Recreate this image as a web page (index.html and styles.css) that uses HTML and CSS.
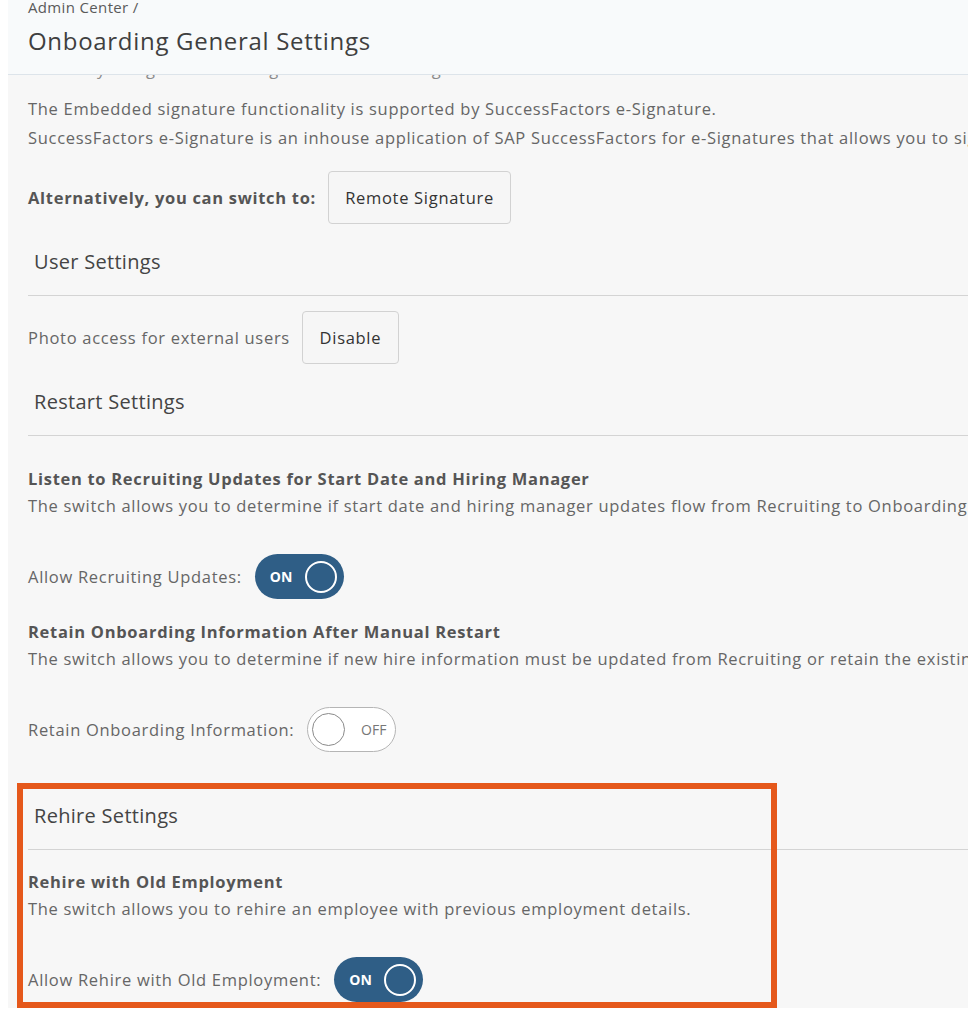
FILE: index.html
```html
<!DOCTYPE html>
<html lang="en">
<head>
<meta charset="utf-8">
<title>Onboarding General Settings</title>
<link rel="stylesheet" href="styles.css">
</head>
<body>
<div class="page">
  <header class="page-header">
    <div class="crumb">Admin Center /</div>
    <h1 class="title">Onboarding General Settings</h1>
  </header>
  <main class="content">
    <div class="clipped"><span>Currently using Embedded Signature for the e-Sign.</span></div>
    <p class="intro">The Embedded signature functionality is supported by SuccessFactors e-Signature.<br>SuccessFactors e-Signature is an inhouse application of SAP SuccessFactors for e-Signatures that allows you to sign documents electronically.</p>

    <div class="row row-alt">
      <span class="label strong">Alternatively, you can switch to:</span>
      <button class="btn btn-remote">Remote Signature</button>
    </div>

    <h2 class="section-title">User Settings</h2>
    <hr class="rule">
    <div class="row row-photo">
      <span class="label">Photo access for external users</span>
      <button class="btn btn-disable">Disable</button>
    </div>

    <h2 class="section-title">Restart Settings</h2>
    <hr class="rule">
    <div class="setting setting-first">
      <div class="setting-title">Listen to Recruiting Updates for Start Date and Hiring Manager</div>
      <div class="setting-desc">The switch allows you to determine if start date and hiring manager updates flow from Recruiting to Onboarding. If you turn off this switch, the updates are not reflected.</div>
      <div class="row row-switch">
        <span class="label">Allow Recruiting Updates:</span>
        <span class="switch on"><span class="switch-text">ON</span><span class="knob"></span></span>
      </div>
    </div>
    <div class="setting">
      <div class="setting-title">Retain Onboarding Information After Manual Restart</div>
      <div class="setting-desc">The switch allows you to determine if new hire information must be updated from Recruiting or retain the existing information after a manual restart.</div>
      <div class="row row-switch">
        <span class="label">Retain Onboarding Information:</span>
        <span class="switch off"><span class="knob"></span><span class="switch-text">OFF</span></span>
      </div>
    </div>

    <section class="rehire">
      <div class="highlight"></div>
      <h2 class="section-title">Rehire Settings</h2>
      <hr class="rule">
      <div class="setting setting-rehire">
        <div class="setting-title">Rehire with Old Employment</div>
        <div class="setting-desc">The switch allows you to rehire an employee with previous employment details.</div>
        <div class="row row-switch">
          <span class="label">Allow Rehire with Old Employment:</span>
          <span class="switch on"><span class="switch-text">ON</span><span class="knob"></span></span>
        </div>
      </div>
    </section>
  </main>
</div>
</body>
</html>
```

FILE: styles.css
```css
html, body {
  margin: 0;
  padding: 0;
  background: #ffffff;
}

body {
  font-family: "Open Sans", "Liberation Sans", sans-serif;
  overflow: hidden;
}

.page {
  margin-left: 8px;
  width: 960px;
  height: 1008px;
  background: #f7f7f7;
  overflow: hidden;
}

.page-header {
  display: flex;
  flex-direction: column;
  height: 74px;
  background: #f8fafb;
  border-bottom: 1px solid #dde4ea;
  padding-left: 20px;
}

.crumb {
  font-size: 15px;
  line-height: 18px;
  letter-spacing: 0.35px;
  color: #5a5a5a;
  margin-top: -2px;
}

.title {
  margin: 9px 0 0 0;
  font-size: 24px;
  font-weight: 400;
  line-height: 32px;
  letter-spacing: 0.7px;
  color: #3f3f3f;
}

.content {
  padding-left: 20px;
  font-size: 16.5px;
  letter-spacing: 0.7px;
}

.clipped {
  height: 9px;
  overflow: hidden;
  white-space: nowrap;
}

.clipped span {
  display: block;
  margin-top: -16px;
  line-height: 20px;
  color: #8a8a8a;
}

.intro {
  margin: 10px 0 0 0;
  line-height: 29px;
  color: #666;
  white-space: nowrap;
}

.row {
  display: flex;
  align-items: center;
  gap: 12px;
  white-space: nowrap;
}

.label {
  color: #666;
}

.label.strong {
  font-weight: 700;
  color: #555;
}

.btn {
  font-family: inherit;
  font-size: 16.5px;
  letter-spacing: 0.7px;
  color: #333;
  background: #f6f6f6;
  border: 1px solid #d2d2d2;
  border-radius: 4px;
  height: 53px;
  padding: 0;
  cursor: pointer;
}

.btn-remote {
  width: 183px;
}

.btn-disable {
  width: 97px;
}

.row-alt {
  margin-top: 19px;
}

.section-title {
  margin: 23px 0 0 0;
  padding-left: 6px;
  font-size: 20px;
  font-weight: 400;
  line-height: 30px;
  letter-spacing: 0.3px;
  color: #444;
}

.rule {
  margin: 18px 0 0 0;
  border: 0;
  border-top: 1px solid #d4d4d4;
  height: 0;
}

.row-photo {
  margin-top: 15px;
}

.setting {
  margin-top: 19px;
}

.setting-first {
  margin-top: 29px;
}

.setting-title {
  font-weight: 700;
  line-height: 27px;
  color: #555;
  white-space: nowrap;
}

.setting-desc {
  line-height: 27px;
  color: #666;
  white-space: nowrap;
}

.row-switch {
  margin-top: 35px;
  gap: 13px;
}

.switch {
  display: inline-flex;
  align-items: center;
  justify-content: space-between;
  box-sizing: border-box;
  width: 89px;
  height: 45px;
  border-radius: 23px;
  letter-spacing: 0;
}

.switch.on {
  background: #2f5e86;
  padding: 0 7px 0 15px;
}

.switch.on .switch-text {
  color: #fff;
  font-weight: 700;
  font-size: 14px;
}

.switch.on .knob {
  width: 32px;
  height: 32px;
  box-sizing: border-box;
  border: 2px solid #fff;
  border-radius: 50%;
}

.switch.off {
  background: #fff;
  border: 1px solid #b5b5b5;
  padding: 0 9px 0 4px;
}

.switch.off .knob {
  width: 33px;
  height: 33px;
  box-sizing: border-box;
  border: 1.5px solid #8a8a8a;
  border-radius: 50%;
}

.switch.off .switch-text {
  color: #777;
  font-size: 14px;
}

.rehire {
  position: relative;
  margin-top: 49px;
}

.rehire .section-title {
  margin-top: 0;
}

.setting-rehire {
  margin-top: 18px;
}

.highlight {
  position: absolute;
  left: -11px;
  top: -18px;
  width: 760px;
  height: 225px;
  box-sizing: border-box;
  border: 6px solid #e5581b;
  pointer-events: none;
}
```
